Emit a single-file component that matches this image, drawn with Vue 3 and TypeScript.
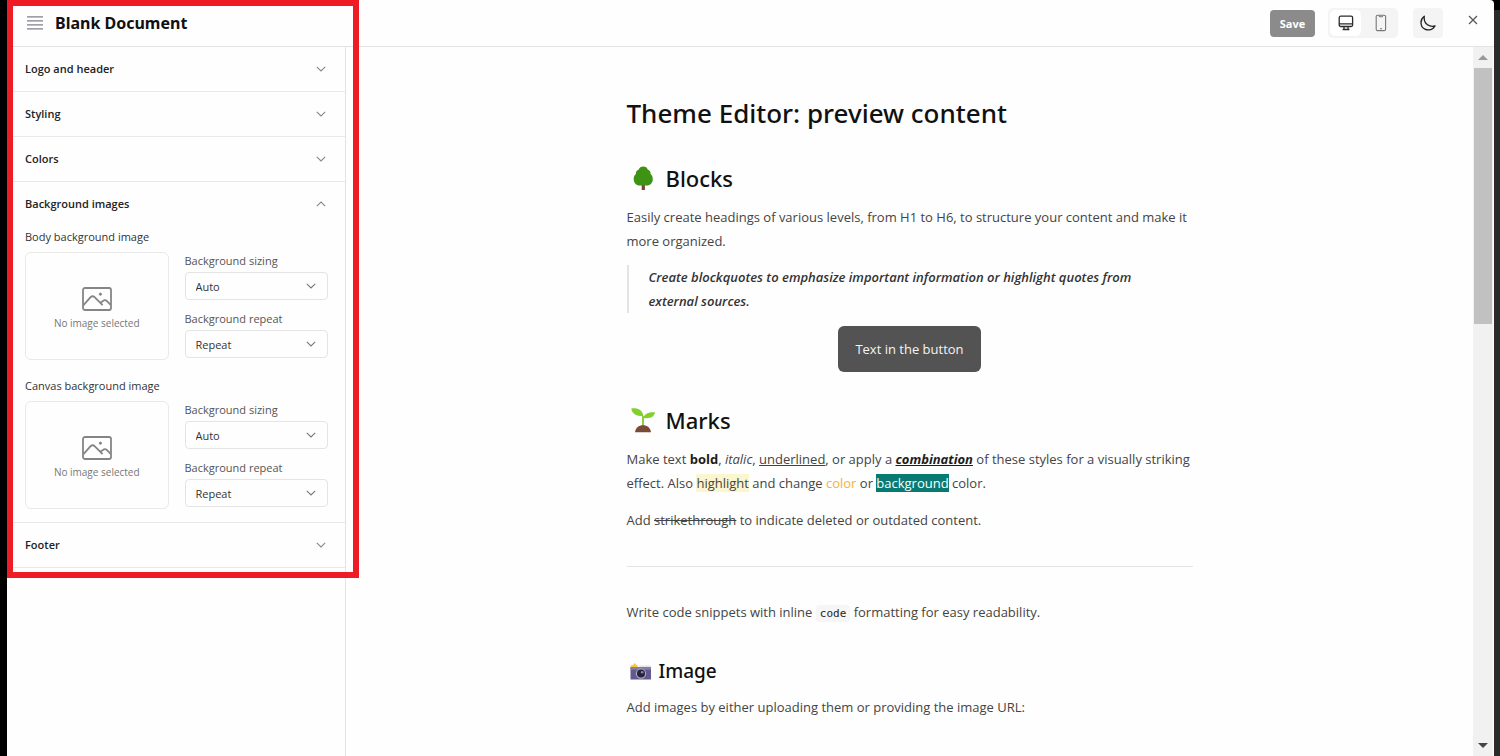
<script setup lang="ts">
import { reactive, ref } from 'vue'

interface ImageGroup {
  id: string
  label: string
  sizing: string
  repeat: string
}

const closedSections: string[] = ['Logo and header', 'Styling', 'Colors']
const groups = reactive<ImageGroup[]>([
  { id: 'body', label: 'Body background image', sizing: 'Auto', repeat: 'Repeat' },
  { id: 'canvas', label: 'Canvas background image', sizing: 'Auto', repeat: 'Repeat' },
])
const sizings: string[] = ['Auto', 'Cover', 'Contain']
const repeats: string[] = ['Repeat', 'No repeat', 'Repeat X', 'Repeat Y']
const device = ref<'desktop' | 'mobile'>('desktop')
</script>

<template>
  <div class="backdrop">
    <div class="window">
      <header class="topbar">
        <button class="plain menu" aria-label="Menu">
          <svg width="16" height="14" viewBox="0 0 16 14" stroke="#808088" stroke-width="1.3">
            <path d="M0 .9h16M0 4.9h16M0 8.9h16M0 12.9h16" />
          </svg>
        </button>
        <h1 class="doc-title">Blank Document</h1>
        <button class="save">Save</button>
        <div class="devices">
          <button class="device" :class="{ active: device === 'desktop' }" aria-label="Desktop" @click="device = 'desktop'">
            <svg width="16" height="16" viewBox="0 0 16 16" fill="none" stroke="#2b2b2b" stroke-width="1.3">
              <rect x="1.2" y="1.2" width="13.4" height="10.3" rx="1.5" />
              <path d="M1.2 8.8h13.4M6 11.5v2.8M10 11.5v2.8M4.6 14.5h6.8" />
            </svg>
          </button>
          <button class="device" :class="{ active: device === 'mobile' }" aria-label="Mobile" @click="device = 'mobile'">
            <svg width="12" height="18" viewBox="0 0 12 18" fill="none" stroke="#777" stroke-width="1.1">
              <rect x="1.2" y="1.2" width="9.4" height="15.4" rx="1.4" />
              <path d="M4 1.5l.6 1.2h2.6l.6-1.2M5 14.7h2" />
            </svg>
          </button>
        </div>
        <button class="theme" aria-label="Dark mode">
          <svg width="16" height="16" viewBox="0 0 16 16" fill="none" stroke="#222" stroke-width="1.3" stroke-linejoin="round">
            <path d="M4.3 1.2C-.6 4.8.2 11.9 4.9 14.1C8.7 16 13.2 14.5 15 10.9C10.5 12.3 3.2 9.6 4.3 1.2z" />
          </svg>
        </button>
        <button class="plain close" aria-label="Close">
          <svg width="10" height="10" viewBox="0 0 10 10" stroke="#555" stroke-width="1.2">
            <path d="M1 1l8 8M9 1l-8 8" />
          </svg>
        </button>
      </header>

      <div class="columns">
        <aside class="sidebar">
          <button v-for="name in closedSections" :key="name" class="section-head ruled">
            <span>{{ name }}</span>
            <svg width="10" height="6" viewBox="0 0 10 6" fill="none" stroke="#888" stroke-width="1.1"><path d="M.8.8L5 5L9.2.8" /></svg>
          </button>
          <section class="ruled open">
            <button class="section-head" aria-expanded="true">
              <span>Background images</span>
              <svg width="10" height="6" viewBox="0 0 10 6" fill="none" stroke="#888" stroke-width="1.1"><path d="M.8 5.2L5 1L9.2 5.2" /></svg>
            </button>
            <div v-for="g in groups" :key="g.id" class="group">
              <h2 class="group-label">{{ g.label }}</h2>
              <div class="group-body">
                <button class="picker">
                  <svg width="30" height="24" viewBox="0 0 30 24" fill="none" stroke="#858585" stroke-width="1.8" stroke-linejoin="round">
                    <rect x="1" y="1" width="28" height="22" rx="2" />
                    <path d="M1.5 18.2L8.6 10.2Q10.6 8.2 12.6 10.2L20.6 18.2M18.2 15.8L21.8 13.4Q23.4 12.6 25 14.2L28.6 17.8" />
                    <circle cx="18.4" cy="7.2" r="1.1" fill="#858585" stroke-width="1" />
                  </svg>
                  <span>No image selected</span>
                </button>
                <div class="fields">
                  <label class="field">
                    <span>Background sizing</span>
                    <span class="select-box">
                      <select v-model="g.sizing">
                        <option v-for="o in sizings" :key="o">{{ o }}</option>
                      </select>
                      <svg width="10" height="6" viewBox="0 0 10 6" fill="none" stroke="#777" stroke-width="1.1"><path d="M.8.8L5 5L9.2.8" /></svg>
                    </span>
                  </label>
                  <label class="field">
                    <span>Background repeat</span>
                    <span class="select-box">
                      <select v-model="g.repeat">
                        <option v-for="o in repeats" :key="o">{{ o }}</option>
                      </select>
                      <svg width="10" height="6" viewBox="0 0 10 6" fill="none" stroke="#777" stroke-width="1.1"><path d="M.8.8L5 5L9.2.8" /></svg>
                    </span>
                  </label>
                </div>
              </div>
            </div>
          </section>
          <button class="section-head ruled">
            <span>Footer</span>
            <svg width="10" height="6" viewBox="0 0 10 6" fill="none" stroke="#888" stroke-width="1.1"><path d="M.8.8L5 5L9.2.8" /></svg>
          </button>
        </aside>

        <main class="preview">
          <article class="article">
            <h1>Theme Editor: preview content</h1>

            <h2>
              <svg class="emoji" width="32" height="26" viewBox="0 0 32 26">
                <rect x="14.7" y="16" width="3.2" height="9" fill="#7d4533" />
                <path d="M16.3 1.5c2.3 0 3.9 1.2 4.4 3.1 2 .8 3.2 2.5 2.9 4.5 1.5 1.2 2.2 2.7 2.2 4.9 0 4-2.6 6.5-5.9 6.5h-7.3c-3.3 0-5.9-2.5-5.9-6.5 0-2.2.7-3.7 2.2-4.9-.3-2 .9-3.7 2.9-4.5.5-1.9 2.2-3.1 4.5-3.1z" fill="#3f9314" />
              </svg>
              Blocks
            </h2>
            <p class="tight">Easily create headings of various levels, from H1 to H6, to structure your content and make it more organized.</p>
            <blockquote>Create blockquotes to emphasize important information or highlight quotes from external sources.</blockquote>
            <button class="cta">Text in the button</button>

            <h2>
              <svg class="emoji" width="32" height="26" viewBox="0 0 32 26">
                <path d="M16 20V9" stroke="#7fc92c" stroke-width="1.8" fill="none" />
                <path d="M4.3 1.5C10 .6 15.5 2.5 16.3 9 9.5 9.6 4.9 6.7 4.3 1.5z" fill="#83cf2e" />
                <path d="M28 5.3c-4.7-.6-10.2.7-11.8 5.4C21.5 12.3 27.3 10.5 28 5.3z" fill="#83cf2e" />
                <path d="M8 25.2c.7-4.7 3.7-7 8-7s7.3 2.3 8 7z" fill="#7a4a38" />
              </svg>
              Marks
            </h2>
            <p class="tight">Make text <b>bold</b>, <i>italic</i>, <u>underlined</u>, or apply a <b><i><u>combination</u></i></b> of these styles for a visually striking effect. Also <mark>highlight</mark> and change <span class="tinted">color</span> or <span class="filled">background</span> color.</p>
            <p>Add <s>strikethrough</s> to indicate deleted or outdated content.</p>
            <hr />
            <p class="spaced">Write code snippets with inline <code>code</code> formatting for easy readability.</p>

            <h3>
              <svg class="emoji" width="26" height="22" viewBox="0 0 26 22">
                <path d="M4 8L3.5 5.5 6 5 7.5 3 9.500 5 11 5.500 10 8z" fill="#fcc838" />
                <path d="M11.5 8l1-2.5h5l1 2.5z" fill="#e3e3e8" />
                <path d="M18 5.3h5.5v2H18z" fill="#e3e3e8" />
                <rect x="3.5" y="7.2" width="20.5" height="12.3" fill="#62598f" />
                <rect x="3.5" y="7.2" width="20.5" height="2.5" fill="#857fa8" />
                <circle cx="14" cy="13.6" r="5.2" fill="#aca8c5" />
                <circle cx="14" cy="13.6" r="4" fill="#262238" />
                <circle cx="15.2" cy="12.3" r="1.3" fill="#8d87ad" />
              </svg>
              Image
            </h3>
            <p class="close-set">Add images by either uploading them or providing the image URL:</p>
          </article>
        </main>

        <div class="scrollbar" aria-hidden="true">
          <svg width="10" height="5" viewBox="0 0 10 5"><path d="M0 5L5 0l5 5z" fill="#999" /></svg>
          <div class="track"><div class="thumb"></div></div>
          <svg width="10" height="5" viewBox="0 0 10 5"><path d="M0 0l5 5 5-5z" fill="#444" /></svg>
        </div>
      </div>
    </div>
    <div class="callout"></div>
  </div>
</template>

<style>
body {
  margin: 0;
  background: #000;
}
</style>

<style scoped>
.backdrop {
  position: relative;
  box-sizing: border-box;
  height: 100vh;
  padding: 0 6px 0 7px;
  overflow: hidden;
  background: linear-gradient(to bottom, #000 10px, #2b2b2b 10px) right / 6px 100% no-repeat #000;
  font-family: "Open Sans", "Noto Sans", sans-serif;
  font-size: 11px;
  color: #333;
}
.window {
  display: flex;
  flex-direction: column;
  height: 100%;
  background: #fefefe;
  border-radius: 4px 4px 0 0;
  overflow: hidden;
}
button,
select {
  font: inherit;
  color: inherit;
  border: 0;
  margin: 0;
  padding: 0;
  background: none;
}
svg {
  display: block;
  flex: none;
}
.topbar {
  display: flex;
  align-items: center;
  height: 46px;
  flex: none;
  padding: 0 16px 0 20px;
  border-bottom: 1px solid #e4e4e4;
}
.plain {
  display: flex;
}
.doc-title {
  flex: 1;
  margin: 0 0 0 12px;
  font-family: "Noto Sans", sans-serif;
  font-size: 16px;
  line-height: 24px;
  font-weight: 700;
  color: #111;
}
.save {
  width: 45px;
  height: 27px;
  border-radius: 4px;
  background: #8b8b8b;
  color: #fff;
  font-weight: 700;
}
.devices {
  display: flex;
  gap: 4px;
  margin-left: 13px;
  padding: 2px;
  border-radius: 5px;
  background: #f4f4f4;
}
.device {
  display: flex;
  align-items: center;
  justify-content: center;
  width: 31px;
  height: 26px;
  border-radius: 5px;
}
.device.active {
  background: #fff;
}
.theme {
  display: flex;
  align-items: center;
  justify-content: center;
  width: 30px;
  height: 30px;
  margin-left: 15px;
  border-radius: 4px;
  background: #f4f4f4;
}
.close {
  margin: 0 0 7px 25px;
}
.columns {
  display: flex;
  flex: 1;
  min-height: 0;
}
.sidebar {
  width: 338px;
  flex: none;
  border-right: 1px solid #e4e4e4;
}
.ruled {
  border-bottom: 1px solid #e9e9e9;
}
.section-head {
  display: flex;
  align-items: center;
  justify-content: space-between;
  box-sizing: content-box;
  width: calc(100% - 37px);
  height: 43px;
  padding: 0 19px 1px 18px;
  font-weight: 600;
  color: #222;
}
.open {
  padding-bottom: 13px;
}
.group {
  padding: 0 17px 0 18px;
}
.group + .group {
  margin-top: 15px;
}
.group-label {
  margin: 0 0 4px;
  font-size: 11px;
  line-height: 22px;
  font-weight: 400;
}
.group-body {
  display: grid;
  grid-template-columns: 1fr 1fr;
  gap: 16px;
}
.picker {
  display: flex;
  flex-direction: column;
  align-items: center;
  justify-content: center;
  gap: 4px;
  height: 108px;
  padding-top: 6px;
  border: 1px solid #e9e9e9;
  border-radius: 6px;
  font-size: 10px;
  line-height: 16px;
  color: #777;
}
.fields {
  display: flex;
  flex-direction: column;
  gap: 10px;
}
.field {
  display: flex;
  flex-direction: column;
  gap: 3px;
  line-height: 17px;
  color: #555;
}
.select-box {
  display: grid;
  align-items: center;
}
.select-box > * {
  grid-area: 1 / 1;
}
.select-box svg {
  justify-self: end;
  margin-right: 12px;
  pointer-events: none;
}
.select-box select {
  appearance: none;
  height: 28px;
  padding: 0 10px;
  border: 1px solid #e4e4e4;
  border-radius: 4px;
  color: #333;
}
.preview {
  flex: 1;
  min-width: 0;
  overflow: hidden;
}
.article {
  display: flex;
  flex-direction: column;
  max-width: 566px;
  margin: 0 auto;
  padding-top: 48px;
  font-size: 13px;
  line-height: 24px;
  color: #444;
}
.article h1,
.article h2,
.article h3 {
  display: flex;
  align-items: center;
  margin: 0;
  font-family: "Noto Sans", sans-serif;
  font-weight: 500;
  color: #111;
}
.article h1 {
  font-size: 26px;
  line-height: 36px;
}
.article h2 {
  gap: 7px;
  margin-top: 31px;
  font-size: 22px;
  line-height: 32px;
}
.article h3 {
  gap: 6px;
  margin-top: 31px;
  font-size: 19px;
  line-height: 28px;
}
.article p {
  margin: 13px 0 0;
}
.article .tight {
  margin-top: 11px;
}
.article .close-set {
  margin-top: 10px;
}
.article .spaced {
  margin-top: 33px;
}
blockquote {
  margin: 12px 0 0;
  padding: 0 20px;
  border-left: 2px solid #e4e4e4;
  font-style: italic;
  font-weight: 600;
  color: #333;
}
.cta {
  align-self: center;
  margin: 13px 0 1px;
  height: 46px;
  padding: 0 17px;
  border-radius: 6px;
  background: #535353;
  color: #f4f4f4;
}
.article b {
  font-weight: 700;
  color: #1c1c1c;
}
mark {
  background: #fbf6cd;
  color: inherit;
}
.tinted {
  color: #f5b335;
}
.filled {
  background: #087a73;
  color: #fff;
}
hr {
  width: 100%;
  height: 1px;
  margin: 34px 0 0;
  border: 0;
  background: #e4e4e4;
}
code {
  padding: 2px 4px;
  border-radius: 3px;
  background: #f6f6f6;
  font-family: "DejaVu Sans Mono", monospace;
  font-size: 11px;
  color: #222;
}
.scrollbar {
  display: flex;
  flex-direction: column;
  align-items: center;
  gap: 8px;
  width: 20px;
  flex: none;
  box-sizing: border-box;
  padding: 8px 0;
  margin-right: 1px;
  background: #f1f1f1;
}
.track {
  flex: 1;
  width: 18px;
}
.thumb {
  height: 256px;
  background: #c1c1c1;
}
.callout {
  position: absolute;
  top: 0;
  left: 7px;
  width: 340px;
  height: 566px;
  border: 6px solid #ee1c25;
  pointer-events: none;
}
</style>
